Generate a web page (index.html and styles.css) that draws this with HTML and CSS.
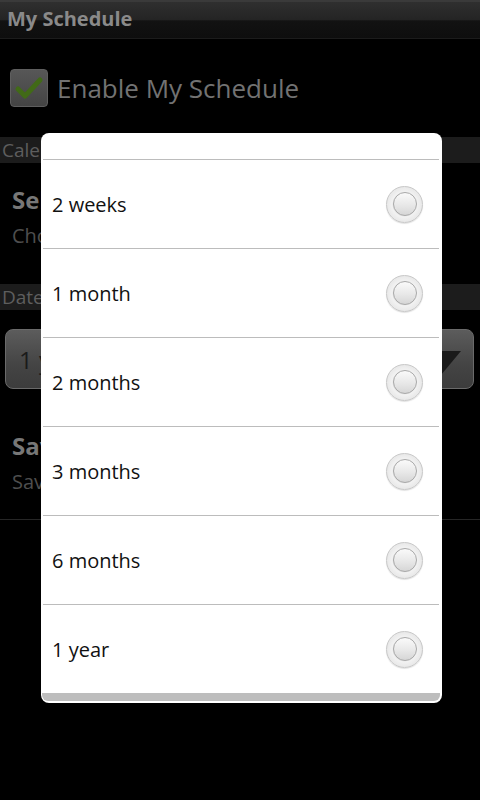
FILE: index.html
```html
<!DOCTYPE html>
<html lang="en">
<head>
    <meta charset="UTF-8">
    <meta name="viewport" content="width=device-width, initial-scale=1.0">
    <title>My Schedule</title>
    <link rel="stylesheet" href="styles.css">
</head>
<body>
    <div class="screen">
        <div class="title-bar">My Schedule</div>

        <div class="check-row">
            <span class="checkbox">
                <svg width="30" height="26" viewBox="0 0 30 26">
                    <path d="M4 14 L11 21 L26 5" fill="none" stroke="#416a17" stroke-width="5" stroke-linecap="round" stroke-linejoin="round"/>
                </svg>
            </span>
            <span class="check-label">Enable My Schedule</span>
        </div>

        <div class="category">Calendar</div>
        <div class="pref">
            <div class="pref-title">Select calendar</div>
            <div class="pref-summary">Choose which calendar to use</div>
        </div>

        <div class="category">Date range</div>
        <div class="spinner-wrap">
            <div class="spinner">
                <span>1 year</span>
                <span class="arrow"></span>
            </div>
        </div>

        <div class="pref pref-last">
            <div class="pref-title">Save schedule</div>
            <div class="pref-summary">Save events to the calendar</div>
        </div>
    </div>

    <div class="dialog-layer">
        <div class="dialog">
            <div class="list">
                <div class="list-top"></div>
                <label class="option"><span>2 weeks</span><input type="radio" name="range"><i class="radio"></i></label>
                <label class="option"><span>1 month</span><input type="radio" name="range"><i class="radio"></i></label>
                <label class="option"><span>2 months</span><input type="radio" name="range"><i class="radio"></i></label>
                <label class="option"><span>3 months</span><input type="radio" name="range"><i class="radio"></i></label>
                <label class="option"><span>6 months</span><input type="radio" name="range"><i class="radio"></i></label>
                <label class="option"><span>1 year</span><input type="radio" name="range"><i class="radio"></i></label>
            </div>
            <div class="dialog-foot"></div>
        </div>
    </div>
</body>
</html>
```

FILE: styles.css
```css
body {
    margin: 0;
    background: #000;
    font-family: "Open Sans", "DejaVu Sans", sans-serif;
    width: 480px;
    height: 800px;
    overflow: hidden;
    position: relative;
}

.screen {
    height: 800px;
}

.title-bar {
    height: 36px;
    border-top: 2px solid #3a3a3a;
    border-bottom: 1px solid #1c1c1c;
    background: linear-gradient(#2f2f2f, #242424 50%, #121212 52%, #0e0e0e);
    color: #8a8a8a;
    font-weight: bold;
    font-size: 20px;
    line-height: 34px;
    padding-left: 7px;
}

.check-row {
    height: 98px;
    display: flex;
    align-items: center;
    padding-left: 10px;
    box-sizing: border-box;
}

.checkbox {
    width: 36px;
    height: 36px;
    border: 1px solid #5e5e5e;
    border-radius: 4px;
    background: linear-gradient(#575757, #444);
    display: flex;
    align-items: center;
    justify-content: center;
}

.check-label {
    margin-left: 9px;
    color: #727272;
    font-size: 26px;
}

.category {
    height: 26px;
    background: #1c1c1c;
    color: #5e5e5e;
    font-size: 19px;
    line-height: 26px;
    padding-left: 2px;
}

.pref {
    height: 121px;
    padding: 20px 12px 0;
    box-sizing: border-box;
}

.pref-title {
    color: #777;
    font-weight: bold;
    font-size: 24px;
}

.pref-summary {
    color: #4e4e4e;
    font-size: 20px;
    margin-top: 6px;
}

.pref-last {
    height: 111px;
    border-bottom: 1px solid #262626;
}

.spinner-wrap {
    height: 99px;
    padding: 19px 6px 0 5px;
    box-sizing: border-box;
}

.spinner {
    height: 60px;
    border: 1px solid #6a6a6a;
    border-radius: 8px;
    background: linear-gradient(#5c5c5c, #444 60%, #3c3c3c);
    display: flex;
    align-items: center;
    justify-content: space-between;
    padding: 0 12px 0 13px;
    box-sizing: border-box;
    color: #1a1a1a;
    font-size: 24px;
}

/* drop-down triangle */
.arrow {
    width: 0;
    height: 0;
    border-left: 20px solid transparent;
    border-right: 20px solid transparent;
    border-top: 24px solid #1a1a1a;
    margin-top: 8px;
}

/* dialog over the settings screen */
.dialog-layer {
    position: absolute;
    top: 0;
    left: 0;
    right: 0;
    bottom: 0;
}

.dialog {
    position: absolute;
    top: 133px;
    left: 41px;
    width: 401px;
    background: #fff;
    border-radius: 8px;
    padding: 0 2px 2px 1px;
    box-sizing: border-box;
    overflow: hidden;
}

.list-top {
    height: 26px;
    border-bottom: 1px solid #bcbcbc;
    margin: 0 1px;
}

.option {
    height: 88px;
    display: flex;
    align-items: center;
    justify-content: space-between;
    padding: 0 16px 0 9px;
    border-bottom: 1px solid #bcbcbc;
    margin: 0 1px;
    font-size: 20px;
    color: #111;
}

.option:last-child {
    border-bottom: none;
}

.option input {
    display: none;
}

.radio {
    width: 35px;
    height: 35px;
    border-radius: 50%;
    border: 1px solid #c8c8c8;
    background: radial-gradient(circle, #cfcfcf 38%, #f2f2f2 50%, #e4e4e4 80%, #d4d4d4);
    box-shadow: 0 1px 1px #e2e2e2;
    display: flex;
    align-items: center;
    justify-content: center;
}

.radio::after {
    content: "";
    width: 22px;
    height: 22px;
    border-radius: 50%;
    border: 1px solid #a9a9a9;
    background: linear-gradient(#fafafa, #e8e8e8 55%, #d6d6d6);
}

.dialog-foot {
    height: 8px;
    background: #bdbdbd;
    border-radius: 0 0 6px 6px;
}
```
